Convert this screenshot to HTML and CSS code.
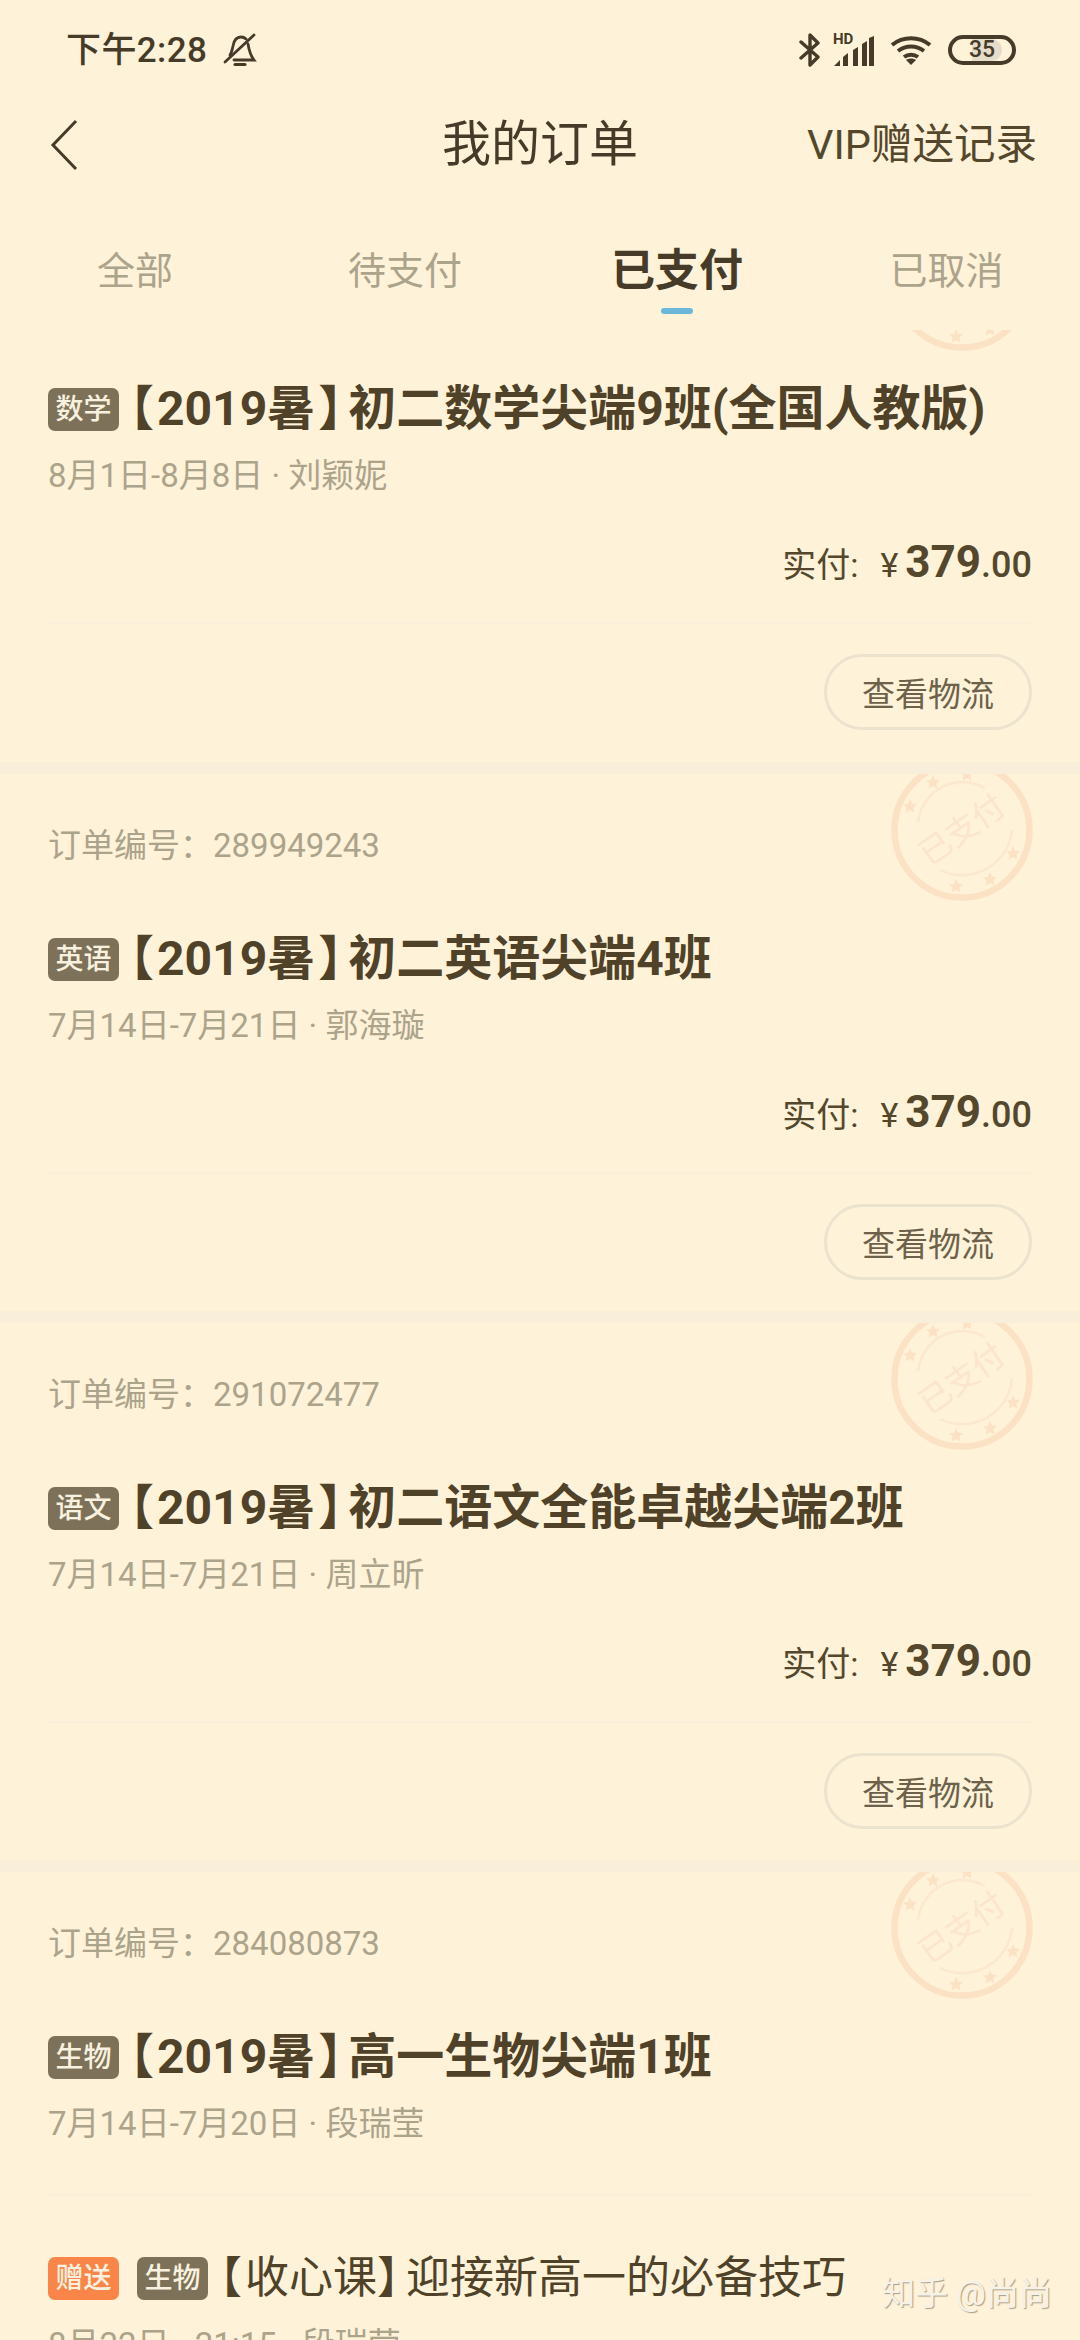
FILE: index.html
```html
<!DOCTYPE html>
<html lang="zh-CN">
<head>
<meta charset="utf-8">
<title>我的订单</title>
<link rel="stylesheet" href="styles.css">
</head>
<body>
<div class="app">
  <div class="status">
    <div class="status-left">
      <span class="time">下午2:28</span>
      <svg class="bell" width="34" height="34" viewBox="0 0 34 34" fill="none" stroke="#463b28" stroke-width="2.8" stroke-linecap="round"><path d="M2 29L31 2"/><path d="M7 22c2-3 2-5 3-9 1-6 4-9 8-9 2 0 4 1 5 2M25 11c1 6 2 11 6 16H11"/><path d="M12 31.500h10" stroke-width="3"/></svg>
    </div>
    <div class="status-right">
      <svg width="21" height="34" viewBox="0 0 21 34" fill="none" stroke="#463b28" stroke-width="3.4" stroke-linejoin="round" stroke-linecap="round"><path d="M2 9l17 15-8 8V2l8 8L2 25"/></svg>
      <svg class="signal" width="40" height="30" viewBox="0 0 40 30" fill="#463b28"><path d="M0 30l6-6v6zM9 21l5-4v13H9zM19 14l5-3v19h-5zM28 8l5-3v25h-5zM35 2l5-2v30h-5z"/></svg>
      <span class="hd">HD</span>
      <svg class="wifi" width="42" height="30" viewBox="0 0 42 30" fill="none" stroke="#463b28" stroke-width="4"><path d="M2 10c11-9 27-9 38 0M8 16c8-6 18-6 26 0M14 22c4-3 10-3 14 0"/><path d="M21 30l-5-5c3-2 7-2 10 0z" fill="#463b28" stroke="none"/></svg>
      <div class="battery"><span class="battery-fill"></span><span class="battery-num">35</span></div>
    </div>
  </div>

  <div class="nav">
    <svg class="back" width="28" height="52" viewBox="0 0 28 52" fill="none" stroke="#463b28" stroke-width="3"><path d="M26 2L3 26l23 24"/></svg>
    <h1 class="nav-title">我的订单</h1>
    <span class="nav-link">VIP赠送记录</span>
  </div>

  <div class="tabs">
    <span class="tab">全部</span>
    <span class="tab">待支付</span>
    <span class="tab tab-on">已支付</span>
    <span class="tab tab-end">已取消</span>
  </div>

  <div class="list">
    <section class="card card-first">
      <svg class="stamp" viewBox="0 0 142 142" width="142" height="142"><use href="#stamp-art"/></svg>
      <div class="title-row"><span class="tag">数学</span><span class="title"><span class="br-l">【</span>2019暑<span class="br-r">】</span>初二数学尖端9班(全国人教版)</span></div>
      <div class="meta">8月1日-8月8日 · 刘颖妮</div>
      <div class="price"><span class="price-label">实付:</span><span class="yen">¥</span><b class="big">379</b><b class="small">.00</b></div>
      <div class="rule"></div>
      <div class="actions"><button class="btn">查看物流</button></div>
    </section>

    <section class="card">
      <svg class="stamp" viewBox="0 0 142 142" width="142" height="142"><use href="#stamp-art"/></svg>
      <span class="stamp-text">已支付</span>
      <div class="order-no">订单编号：289949243</div>
      <div class="title-row"><span class="tag">英语</span><span class="title"><span class="br-l">【</span>2019暑<span class="br-r">】</span>初二英语尖端4班</span></div>
      <div class="meta">7月14日-7月21日 · 郭海璇</div>
      <div class="price"><span class="price-label">实付:</span><span class="yen">¥</span><b class="big">379</b><b class="small">.00</b></div>
      <div class="rule"></div>
      <div class="actions"><button class="btn">查看物流</button></div>
    </section>

    <section class="card">
      <svg class="stamp" viewBox="0 0 142 142" width="142" height="142"><use href="#stamp-art"/></svg>
      <span class="stamp-text">已支付</span>
      <div class="order-no">订单编号：291072477</div>
      <div class="title-row"><span class="tag">语文</span><span class="title"><span class="br-l">【</span>2019暑<span class="br-r">】</span>初二语文全能卓越尖端2班</span></div>
      <div class="meta">7月14日-7月21日 · 周立昕</div>
      <div class="price"><span class="price-label">实付:</span><span class="yen">¥</span><b class="big">379</b><b class="small">.00</b></div>
      <div class="rule"></div>
      <div class="actions"><button class="btn">查看物流</button></div>
    </section>

    <section class="card card-last">
      <svg class="stamp" viewBox="0 0 142 142" width="142" height="142"><use href="#stamp-art"/></svg>
      <span class="stamp-text">已支付</span>
      <div class="order-no">订单编号：284080873</div>
      <div class="title-row"><span class="tag">生物</span><span class="title"><span class="br-l">【</span>2019暑<span class="br-r">】</span>高一生物尖端1班</span></div>
      <div class="meta">7月14日-7月20日 · 段瑞莹</div>
      <div class="rule rule-wide"></div>
      <div class="title-row"><span class="tag tag-gift">赠送</span><span class="tag">生物</span><span class="title title-light"><span class="br-l">【</span>收心课<span class="br-r">】</span>迎接新高一的必备技巧</span></div>
      <div class="meta">8月22日 · 21:15 · 段瑞莹</div>
    </section>
  </div>

  <div class="watermark">知乎 @尚尚</div>
</div>

<svg class="defs" width="0" height="0" aria-hidden="true">
  <defs>
    <g id="stamp-art" fill="none" stroke="#fce2c5">
      <circle cx="71" cy="71" r="67.500" stroke-width="6.500"/>
      <path d="M27 63A45 45 0 0 1 94 29" stroke-width="2.500" stroke="#fce7cf"/>
      <path d="M121 71A50 50 0 0 1 49 111" stroke-width="2.500" stroke="#fce7cf"/>
      <g fill="#fce2c5" stroke="none">
        <path id="st" d="M42 16l2 4.500 5 .5-3.500 3.500.8 5-4.300-2.400-4.300 2.400.8-5L35 21.500l5-.5z"/>
        <use href="#st" x="-23" y="24"/>
        <use href="#st" x="80" y="71"/>
        <use href="#st" x="57" y="97"/>
        <use href="#st" x="23" y="104"/>
        <use href="#st" x="34" y="-8"/>
      </g>
    </g>
  </defs>
</svg>
</body>
</html>
```

FILE: styles.css
```css
* { box-sizing: border-box; }
html, body { margin: 0; padding: 0; }
body {
  width: 1080px;
  height: 2340px;
  overflow: hidden;
  background: #fef2d9;
  color: #54472c;
  font-family: Roboto, "Noto Sans CJK SC", sans-serif;
}
.app {
  position: relative;
  width: 1080px;
  height: 2340px;
  display: flex;
  flex-direction: column;
  overflow: hidden;
}
.defs { position: absolute; }

.status {
  height: 93px;
  padding: 6px 64px 0 66px;
  display: flex;
  align-items: center;
  justify-content: space-between;
  flex: none;
}
.status-left { display: flex; align-items: center; gap: 16px; }
.time { font-size: 35px; line-height: 44px; padding-top: 2px; font-weight: 500; color: #463b28; letter-spacing: .4px; }
.status-right { position: relative; display: flex; align-items: center; gap: 14px; }
.signal { margin-top: 2px; }
.hd {
  position: absolute;
  left: 34px;
  top: 0;
  font-size: 15px;
  line-height: 13px;
  font-weight: 700;
  color: #463b28;
}
.wifi { margin-left: 2px; }
.battery {
  position: relative;
  width: 68px;
  height: 30px;
  border: 4px solid #463b28;
  border-radius: 15px;
  margin-left: 2px;
  display: flex;
  align-items: center;
  justify-content: center;
  overflow: hidden;
}
.battery-fill {
  position: absolute;
  left: 34%;
  top: 0;
  bottom: 0;
  width: 50%;
  background: #e4ddc9;
  border-radius: 0 11px 11px 0;
}
.battery-num { position: relative; font-size: 23px; line-height: 22px; font-weight: 500; color: #463b28; }

.nav {
  position: relative;
  height: 100px;
  flex: none;
  padding: 4px 43px 0 50px;
  display: flex;
  align-items: center;
  justify-content: space-between;
}
.nav-title {
  position: absolute;
  left: 0;
  right: 0;
  margin: 0;
  text-align: center;
  font-size: 49px;
  line-height: 64px;
  font-weight: 400;
  color: #463b28;
}
.nav-link { position: relative; font-size: 41.500px; line-height: 56px; color: #54472c; }
.back { position: relative; }

.tabs {
  height: 137px;
  flex: none;
  display: grid;
  grid-template-columns: repeat(4, 1fr);
  justify-items: center;
  padding-top: 54px;
}
.tab {
  position: relative;
  font-size: 38px;
  line-height: 48px;
  height: 48px;
  color: #aca38b;
}
.tab-end { margin-left: 3px; }
.tab-on { margin-left: 4px; font-size: 44px; font-weight: 700; color: #463b28; }
.tab-on::after {
  content: "";
  position: absolute;
  left: 50%;
  top: 61px;
  width: 32px;
  height: 6px;
  margin-left: -16px;
  border-radius: 3px;
  background: #6cb7d9;
}

.list {
  flex: 1;
  min-height: 0;
  overflow: hidden;
  display: flex;
  flex-direction: column;
  gap: 12px;
  background: #f8eeda;
}
.card {
  position: relative;
  flex: none;
  height: 537px;
  padding: 0 48px;
  background: #fef2d9;
  overflow: hidden;
}
.card-first { height: 432px; padding-top: 35px; }
.card-last { height: 600px; }

.stamp { position: absolute; left: 891px; top: -15px; filter: blur(.5px); }
.card-first .stamp { top: -121px; }
.stamp-text {
  position: absolute;
  left: 911px;
  top: 36px;
  width: 102px;
  text-align: center;
  font-size: 32px;
  line-height: 40px;
  color: #fce5cd;
  transform: rotate(-35deg);
}

.order-no {
  height: 141px;
  padding-top: 3px;
  line-height: 138px;
  font-size: 33px;
  color: #aca38b;
}
.title-row {
  height: 88px;
  display: flex;
  align-items: center;
  gap: 18px;
}
.tag {
  flex: none;
  width: 71px;
  height: 43px;
  border-radius: 7px;
  background: #7d7259;
  color: #f8f1df;
  font-size: 28px;
  font-weight: 500;
  line-height: 43px;
  text-align: center;
}
.tag-gift { background: #f98548; }
.title {
  font-size: 48px;
  line-height: 88px;
  font-weight: 700;
  color: #4f4229;
  margin-left: -14px;
  white-space: nowrap;
}
.br-l, .br-r { font-feature-settings: "halt"; }
.br-l { margin-left: 7px; margin-right: 3px; }
.br-r { margin-left: 3px; margin-right: 6px; }
.title-light { font-size: 44px; font-weight: 400; margin-left: -12px; }
.title-light .br-l { margin-left: 6px; margin-right: 3px; }
.title-light .br-r { margin-left: 0; margin-right: 7px; }
.meta {
  height: 46px;
  line-height: 46px;
  font-size: 33px;
  color: #aca38b;
  white-space: nowrap;
}
.price {
  margin-top: 37px;
  height: 50px;
  display: flex;
  justify-content: flex-end;
  align-items: baseline;
  color: #54472c;
}
.price-label { font-size: 34px; margin-right: 22px; }
.yen { font-size: 34px; margin-right: 7px; }
.big { font-size: 44px; }
.small { font-size: 36px; font-weight: 500; }
.rule {
  height: 2px;
  margin-top: 36px;
  background: #f9efda;
}
.rule-wide { margin-top: 47px; margin-bottom: 38px; }
.actions {
  margin-top: 30px;
  display: flex;
  justify-content: flex-end;
}
.btn {
  width: 208px;
  height: 76px;
  padding: 0;
  border: 3px solid #ece3cf;
  border-radius: 38px;
  background: transparent;
  font: inherit;
  font-size: 33px;
  color: #6d6249;
}
.watermark {
  position: absolute;
  right: 28px;
  top: 2270px;
  font-size: 33px;
  line-height: 48px;
  color: #f6f2e8;
  text-shadow: 1px 1px 1px rgba(110, 100, 80, .6);
}
```
